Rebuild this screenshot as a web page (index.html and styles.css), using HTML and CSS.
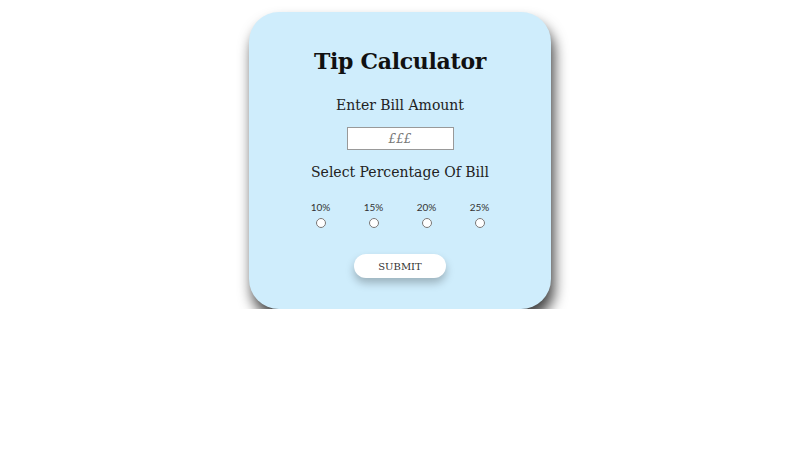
FILE: index.html
```html
<!DOCTYPE html>
<html>
<head>
  <title>Tip Calculator</title>
  <link rel="stylesheet" href="styles.css">
</head>
<body>
  <div class="container">
    <h1>Tip Calculator</h1>

    <p class="prompt">Enter Bill Amount</p>
    <input type="text" id="bill" class="bill" placeholder="£££">

    <p class="prompt">Select Percentage Of Bill</p>
    <div class="options">
      <label class="option"><span>10%</span><input type="radio" name="tip" value="10"></label>
      <label class="option"><span>15%</span><input type="radio" name="tip" value="15"></label>
      <label class="option"><span>20%</span><input type="radio" name="tip" value="20"></label>
      <label class="option"><span>25%</span><input type="radio" name="tip" value="25"></label>
    </div>

    <button class="submit">SUBMIT</button>
  </div>
</body>
</html>
```

FILE: styles.css
```css
body {
  margin: 0;
  padding: 12px 0 0;
  background-color: #fff;
  font-family: "DejaVu Serif", "Liberation Serif", serif;
}

.container {
  width: 302px;
  height: 297px;
  box-sizing: border-box;
  margin: 0 auto;
  padding-top: 34px;
  background-color: #cfedfc;
  border-radius: 30px;
  box-shadow: 3px 10px 14px rgba(0, 0, 0, 0.75);
  text-align: center;
}

h1 {
  margin: 0 0 19px;
  font-size: 22px;
  line-height: 30px;
  font-weight: bold;
  color: #111;
  letter-spacing: -0.3px;
}

.prompt {
  margin: 0;
  font-size: 14px;
  line-height: 20px;
  color: #222;
}

.bill {
  display: block;
  width: 107px;
  height: 23px;
  box-sizing: border-box;
  margin: 12px auto;
  border: 1px solid #999;
  background: #fff;
  font-family: "DejaVu Serif", serif;
  font-style: italic;
  font-size: 12px;
  text-align: center;
}

.bill::placeholder {
  color: #777;
}

.options {
  display: flex;
  justify-content: center;
  gap: 29px;
  margin-top: 19px;
}

.option {
  display: flex;
  flex-direction: column;
  align-items: center;
  width: 24px;
  font-family: "Lato", sans-serif;
  font-size: 10px;
  line-height: 12px;
  color: #333;
}

.option input {
  width: 10px;
  height: 10px;
  margin: 5px 0 0;
}

.submit {
  display: block;
  width: 92px;
  height: 24px;
  margin: 26px auto 0;
  border: none;
  border-radius: 12px;
  background-color: #fff;
  box-shadow: 0 5px 8px rgba(0, 0, 0, 0.25);
  font-family: "DejaVu Serif", serif;
  font-size: 10px;
  color: #333;
  cursor: pointer;
}
```
